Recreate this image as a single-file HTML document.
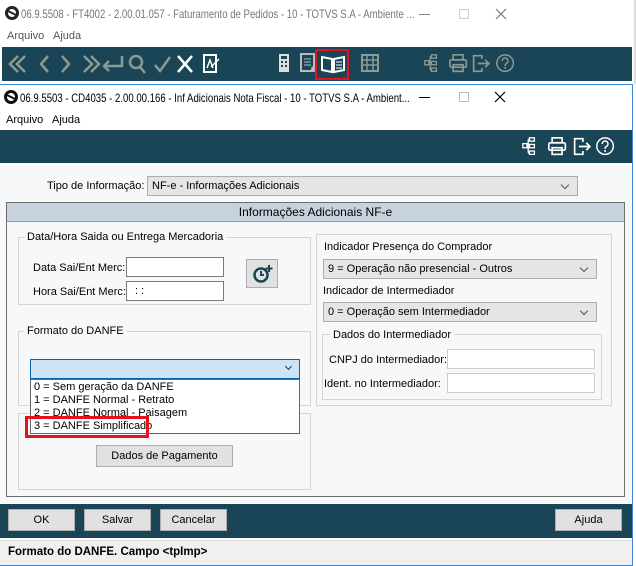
<!DOCTYPE html>
<html><head><meta charset="utf-8"><style>
*{box-sizing:border-box;margin:0;padding:0}
body{width:636px;height:566px;overflow:hidden;background:#fff;font-family:"Liberation Sans",sans-serif;font-size:11px;color:#000;position:relative}
.a{position:absolute;white-space:nowrap}
.dark{background:#194557}
.btn{position:absolute;background:#e1e1e1;border:1px solid #adadad;text-align:center;font-size:11px}
.inp{position:absolute;background:#fff;border:1px solid #7a7a7a}
.sel{position:absolute;background:#e5e5e5;border:1px solid #adadad;padding:3px 4px;font-size:11px;white-space:nowrap}
.sel:after{content:"";position:absolute;right:9px;top:5px;width:5px;height:5px;border-right:1px solid #555;border-bottom:1px solid #555;transform:rotate(45deg)}
.grp{position:absolute;border:1px solid #d5d5d5}
.gl{position:absolute;background:#f7f8fa;padding:0 3px;white-space:nowrap}
.t{font-size:12px;transform:scaleX(0.8);transform-origin:left top}
svg{position:absolute}
</style></head><body>
<svg width="0" height="0"><defs>
<g id="tree"><rect x="9" y="1" width="6" height="4" fill="none" stroke="currentColor" stroke-width="1.6"/><rect x="9" y="9" width="6" height="4" fill="none" stroke="currentColor" stroke-width="1.6"/><rect x="9" y="17" width="6" height="4" fill="none" stroke="currentColor" stroke-width="1.6"/><rect x="1" y="8" width="5" height="5" fill="none" stroke="currentColor" stroke-width="1.6"/><path d="M6 11h3M7.5 3v16M7.5 3h1.5M7.5 19h1.5" stroke="currentColor" stroke-width="1.6" fill="none"/></g>
<g id="print"><rect x="5" y="1" width="12" height="6" fill="none" stroke="currentColor" stroke-width="2"/><rect x="1" y="7" width="20" height="9" rx="2" fill="none" stroke="currentColor" stroke-width="2"/><rect x="5" y="13" width="12" height="8" fill="none" stroke="currentColor" stroke-width="2"/></g>
<g id="exit"><path d="M12 6V2H2v19h10v-4" fill="none" stroke="currentColor" stroke-width="2"/><path d="M7 11.5h13M16 7l4.5 4.5L16 16" fill="none" stroke="currentColor" stroke-width="2"/></g>
<g id="help"><circle cx="11" cy="11" r="10" fill="none" stroke="currentColor" stroke-width="1.8"/><path d="M7.5 8.5a3.5 3.5 0 1 1 5 3c-1.3.7-1.5 1.3-1.5 3" fill="none" stroke="currentColor" stroke-width="1.8"/><circle cx="11" cy="17" r="1.2" fill="currentColor"/></g>
</defs></svg>
<!-- back window -->
<div class="a" style="left:0;top:0;width:636px;height:84px;background:#fff;border-right:2px solid #ddd"></div>
<svg style="left:4px;top:5px" width="16" height="16"><circle cx="8" cy="8" r="7" fill="#222"/><circle cx="8" cy="8" r="4" fill="#fff"/><path d="M4 6 L12 10" stroke="#222" stroke-width="2"/></svg>
<div class="a t" style="left:21px;top:7px;color:#777">06.9.5508 - FT4002 - 2.00.01.057 - Faturamento de Pedidos - 10 - TOTVS S.A - Ambiente ...</div>
<div class="a" style="left:419px;top:14px;width:11px;height:1px;background:#888"></div>
<div class="a" style="left:459px;top:9px;width:10px;height:10px;border:1px solid #ccc"></div>
<svg style="left:495px;top:8px" width="12" height="12"><path d="M1 1L11 11M11 1L1 11" stroke="#777" stroke-width="1.2"/></svg>
<div class="a" style="left:7px;top:30px;color:#555">Arquivo</div>
<div class="a" style="left:53px;top:30px;color:#555">Ajuda</div>
<div class="a dark" style="left:2px;top:47px;width:630px;height:34px"></div>
<svg style="left:6px;top:53px" width="360" height="22" fill="none" stroke="#8b9a92" stroke-width="2.5">
<path d="M12 3L4 11l8 8M19 3l-8 8 8 8"/><path d="M42 3l-7 8 7 8"/><path d="M56 3l7 8-7 8"/><path d="M78 3l8 8-8 8M85 3l8 8-8 8"/>
<path d="M116 3v10h-18M103 8l-5 5 5 5"/><circle cx="130" cy="9" r="6"/><path d="M134 14l5 6"/>
<path d="M149 12l5 6 10-14"/><path d="M172 3l14 16M186 3l-14 16" stroke="#fff"/>
<rect x="198" y="2" width="12" height="17" stroke="#fff" stroke-width="2"/><path d="M201 15l3-8 3 8M205 14l8-8" stroke="#fff" stroke-width="1.5"/>
</svg>
<svg style="left:278px;top:53px" width="12" height="20"><rect x="1" y="1" width="10" height="18" fill="#ddd"/><g fill="#194557"><rect x="3" y="3" width="6" height="3"/><rect x="3" y="8" width="2" height="2"/><rect x="7" y="8" width="2" height="2"/><rect x="3" y="12" width="2" height="2"/><rect x="7" y="12" width="2" height="2"/></g></svg>
<svg style="left:299px;top:53px" width="20" height="20"><rect x="2" y="1" width="13" height="17" fill="none" stroke="#bbb" stroke-width="2"/><path d="M5 6h7M5 9h7M5 12h7" stroke="#bbb"/><circle cx="15" cy="16" r="3" fill="#bbb"/></svg>
<div class="a" style="left:315px;top:49px;width:34px;height:31px;border:2px solid #e8101a"></div>
<svg style="left:320px;top:54px" width="26" height="20"><path d="M2 3 L12 5 L12 18 L2 16Z M24 3 L14 5 L14 18 L24 16Z" fill="none" stroke="#fff" stroke-width="2"/><path d="M16 8h6M16 11h6M16 14h6" stroke="#fff"/></svg>
<svg style="left:361px;top:54px" width="18" height="18"><rect x="1" y="1" width="16" height="16" fill="none" stroke="#8b9a92" stroke-width="2"/><path d="M1 6h16M1 11h16M6 1v16M12 1v16" stroke="#8b9a92" stroke-width="1.5"/></svg>
<svg style="left:424px;top:54px;color:#8b9a92" width="19" height="19" viewBox="0 0 23 23"><use href="#tree"/></svg>
<svg style="left:449px;top:54px;color:#8b9a92" width="19" height="19" viewBox="0 0 23 23"><use href="#print"/></svg>
<svg style="left:472px;top:54px;color:#8b9a92" width="19" height="19" viewBox="0 0 23 23"><use href="#exit"/></svg>
<svg style="left:496px;top:54px;color:#8b9a92" width="19" height="19" viewBox="0 0 23 23"><use href="#help"/></svg>
<!-- front window -->
<div class="a" style="left:0;top:84px;width:633px;height:482px;background:#fff;border:1px solid #3b8ad8;border-left:none"></div>
<svg style="left:3px;top:89px" width="16" height="16"><circle cx="8" cy="8" r="7" fill="#111"/><circle cx="8" cy="8" r="4" fill="#fff"/><path d="M4 6 L12 10" stroke="#111" stroke-width="2"/></svg>
<div class="a t" style="left:20px;top:91px">06.9.5503 - CD4035 - 2.00.00.166 - Inf Adicionais Nota Fiscal - 10 - TOTVS S.A - Ambient...</div>
<div class="a" style="left:419px;top:97px;width:11px;height:1px;background:#000"></div>
<div class="a" style="left:459px;top:92px;width:10px;height:10px;border:1px solid #bbb"></div>
<svg style="left:494px;top:91px" width="12" height="12"><path d="M1 1L11 11M11 1L1 11" stroke="#000" stroke-width="1.2"/></svg>
<div class="a" style="left:6px;top:114px">Arquivo</div>
<div class="a" style="left:52px;top:114px">Ajuda</div>
<div class="a dark" style="left:0;top:130px;width:632px;height:33px"></div>
<svg style="left:522px;top:137px;color:#fff" width="19" height="19" viewBox="0 0 23 23"><use href="#tree"/></svg>
<svg style="left:548px;top:137px;color:#fff" width="19" height="19" viewBox="0 0 23 23"><use href="#print"/></svg>
<svg style="left:573px;top:137px;color:#fff" width="19" height="19" viewBox="0 0 23 23"><use href="#exit"/></svg>
<svg style="left:596px;top:137px;color:#fff" width="19" height="19" viewBox="0 0 23 23"><use href="#help"/></svg>
<div class="a" style="left:0;top:165px;width:632px;height:338px;background:#f7f8fa"></div>
<div class="a" style="left:47px;top:180px">Tipo de Informação:</div>
<div class="sel" style="left:147px;top:176px;width:431px;height:20px;background:#e5e5e5">NF-e - Informações Adicionais</div>
<div class="a" style="left:6px;top:202px;width:619px;height:295px;border:1px solid #6d6d6d"></div>
<div class="a" style="left:7px;top:203px;width:617px;height:19px;background:#c6d2dd;border-bottom:1px solid #999;text-align:center;font-size:12px;line-height:18px">Informações Adicionais NF-e</div>
<div class="grp" style="left:18px;top:237px;width:293px;height:68px"></div>
<div class="gl" style="left:24px;top:231px">Data/Hora Saida ou Entrega Mercadoria</div>
<div class="a" style="left:33px;top:262px">Data Sai/Ent Merc:</div>
<div class="inp" style="left:126px;top:257px;width:98px;height:20px"></div>
<div class="a" style="left:33px;top:286px">Hora Sai/Ent Merc:</div>
<div class="inp" style="left:126px;top:281px;width:98px;height:20px;padding:3px 8px">: :</div>
<div class="btn" style="left:246px;top:259px;width:32px;height:29px"></div>
<svg style="left:252px;top:263px" width="22" height="22"><circle cx="9" cy="12" r="6.5" fill="none" stroke="#194557" stroke-width="2.5"/><path d="M9 8v4h3" stroke="#194557" stroke-width="2" fill="none"/><path d="M17 2v7M13.5 5.5h7" stroke="#194557" stroke-width="2"/></svg>
<div class="grp" style="left:18px;top:331px;width:293px;height:75px"></div>
<div class="gl" style="left:24px;top:325px">Formato do DANFE</div>
<div class="grp" style="left:18px;top:413px;width:293px;height:77px"></div>
<div class="btn" style="left:96px;top:445px;width:137px;height:22px;line-height:20px">Dados de Pagamento</div>
<div class="a" style="left:30px;top:359px;width:270px;height:20px;background:#cce4f7;border:1px solid #0b64a8"></div>
<div class="a" style="left:286px;top:364px;width:5px;height:5px;border-right:1px solid #333;border-bottom:1px solid #333;transform:rotate(45deg)"></div>
<div class="a" style="left:30px;top:379px;width:270px;height:55px;background:#fff;border:1px solid #666;line-height:13px;padding:1px 3px">0 = Sem geração da DANFE<br>1 = DANFE Normal - Retrato<br>2 = DANFE Normal - Paisagem<br>3 = DANFE Simplificado</div>
<div class="a" style="left:25px;top:416px;width:124px;height:22px;border:3px solid #e8101a"></div>
<div class="grp" style="left:316px;top:234px;width:296px;height:172px"></div>
<div class="a" style="left:324px;top:241px">Indicador Presença do Comprador</div>
<div class="sel" style="left:323px;top:259px;width:274px;height:20px">9 = Operação não presencial - Outros</div>
<div class="a" style="left:323px;top:285px">Indicador de Intermediador</div>
<div class="sel" style="left:323px;top:302px;width:274px;height:20px">0 = Operação sem Intermediador</div>
<div class="grp" style="left:322px;top:334px;width:280px;height:66px"></div>
<div class="gl" style="left:330px;top:329px">Dados do Intermediador</div>
<div class="a" style="left:329px;top:354px">CNPJ do Intermediador:</div>
<div class="inp" style="left:447px;top:349px;width:148px;height:20px;border-color:#ccc"></div>
<div class="a" style="left:324px;top:378px">Ident. no Intermediador:</div>
<div class="inp" style="left:447px;top:373px;width:148px;height:20px;border-color:#ccc"></div>
<div class="a dark" style="left:0;top:504px;width:632px;height:34px"></div>
<div class="btn" style="left:8px;top:509px;width:67px;height:22px;line-height:20px">OK</div>
<div class="btn" style="left:84px;top:509px;width:67px;height:22px;line-height:20px">Salvar</div>
<div class="btn" style="left:160px;top:509px;width:67px;height:22px;line-height:20px">Cancelar</div>
<div class="btn" style="left:555px;top:509px;width:67px;height:22px;line-height:20px">Ajuda</div>
<div class="a" style="left:0;top:540px;width:632px;height:25px;background:#f0f0f0;border-top:1px solid #ddd"></div>
<div class="a" style="left:8px;top:546px;font-weight:bold;font-size:11.5px">Formato do DANFE. Campo &lt;tpImp&gt;</div>
</body></html>
